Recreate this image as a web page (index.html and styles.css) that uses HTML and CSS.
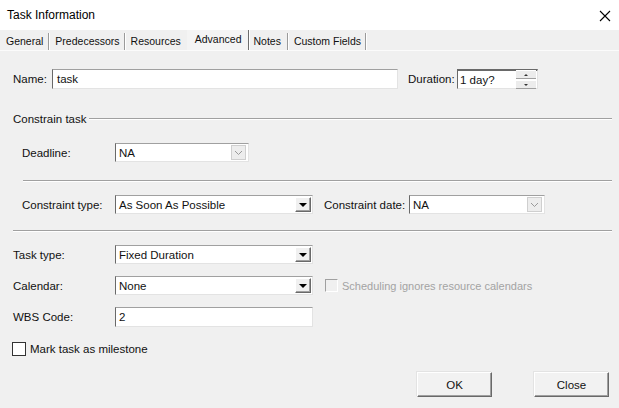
FILE: index.html
```html
<!DOCTYPE html>
<html lang="en">
<head>
<meta charset="UTF-8">
<title>Task Information</title>
<link rel="stylesheet" href="styles.css">
</head>
<body>

<div class="dialog">
  <div class="titlebar">
    <span class="title">Task Information</span>
    <svg class="close" width="12" height="12" viewBox="0 0 12 12">
      <path d="M1 1 L11 11 M11 1 L1 11" stroke="#000" stroke-width="1.1" fill="none"/>
    </svg>
  </div>

  <div class="tabs">
    <span class="tab first">General</span>
    <span class="tab">Predecessors</span>
    <span class="tab nosep">Resources</span>
    <span class="tab active">Advanced</span>
    <span class="tab">Notes</span>
    <span class="tab">Custom Fields</span>
  </div>

  <div class="panel">
    <div class="row name-row">
      <span class="lbl-name">Name:</span>
      <div class="field name-field">task</div>
      <span class="lbl-dur">Duration:</span>
      <div class="field dur-field">
        <span>1 day?</span>
        <div class="spin">
          <span class="spin-btn"><i class="tri up"></i></span>
          <span class="spin-btn"><i class="tri down"></i></span>
        </div>
      </div>
    </div>

    <div class="group-title">
      <span>Constrain task</span>
      <div class="etch"></div>
    </div>

    <div class="row indent deadline-row">
      <span class="lbl lbl-indent">Deadline:</span>
      <div class="combo combo-short">
        <span>NA</span>
        <span class="dd-off">
          <svg width="9" height="6" viewBox="0 0 9 6"><path d="M1 1 L4.5 4.5 L8 1" stroke="#9a9a9a" fill="none"/></svg>
        </span>
      </div>
    </div>

    <div class="etch sep sep-indent"></div>

    <div class="row indent constraint-row">
      <span class="lbl lbl-indent">Constraint type:</span>
      <div class="combo combo-wide">
        <span>As Soon As Possible</span>
        <span class="dd"><i class="tri down big"></i></span>
      </div>
      <span class="lbl-date">Constraint date:</span>
      <div class="combo combo-date">
        <span>NA</span>
        <span class="dd-off">
          <svg width="9" height="6" viewBox="0 0 9 6"><path d="M1 1 L4.5 4.5 L8 1" stroke="#9a9a9a" fill="none"/></svg>
        </span>
      </div>
    </div>

    <div class="etch sep sep2"></div>

    <div class="row task-row">
      <span class="lbl">Task type:</span>
      <div class="combo combo-wide">
        <span>Fixed Duration</span>
        <span class="dd"><i class="tri down big"></i></span>
      </div>
    </div>

    <div class="row cal-row">
      <span class="lbl">Calendar:</span>
      <div class="combo combo-wide">
        <span>None</span>
        <span class="dd"><i class="tri down big"></i></span>
      </div>
      <span class="check check-off"></span>
      <span class="check-lbl off">Scheduling ignores resource calendars</span>
    </div>

    <div class="row wbs-row">
      <span class="lbl">WBS Code:</span>
      <div class="field wbs-field">2</div>
    </div>

    <div class="row milestone-row">
      <span class="check"></span>
      <span class="check-lbl">Mark task as milestone</span>
    </div>

    <div class="buttons">
      <button class="btn">OK</button>
      <button class="btn">Close</button>
    </div>
  </div>
</div>

</body>
</html>
```

FILE: styles.css
```css
body {
  margin: 0;
  font-family: "Liberation Sans", Arial, sans-serif;
  font-size: 11.5px;
  color: #111;
  background-color: #f0f0f0;
}

.dialog {
  width: 619px;
  height: 408px;
  overflow: hidden;
  background-color: #f0f0f0;
}

.titlebar {
  height: 30px;
  background-color: #fff;
  display: flex;
  align-items: center;
  justify-content: space-between;
  padding: 0 8px 0 7px;
}

.title {
  font-size: 12px;
  color: #000;
}

.close {
  margin-top: 1px;
}

/* tab strip */
.tabs {
  height: 20px;
  display: flex;
  align-items: flex-end;
  font-size: 10.5px;
  border-bottom: 1px solid #fbfbfb;
}

.tab {
  height: 17px;
  line-height: 17px;
  padding: 0 4px 0 5px;
  margin-right: 1px;
  border-right: 1px solid #9a9a9a;
  box-shadow: 1px 0 0 #fff;
}

.tab.first {
  padding-left: 6px;
  padding-right: 5px;
}

.tab.nosep {
  border-right-color: transparent;
  box-shadow: none;
  padding-right: 4px;
}

.tab.active {
  height: 20px;
  line-height: 18px;
  padding: 0 7px 0 8px;
  background-color: #f4f4f4;
  border-right: 1px solid #6d6d6d;
}

.tab.active + .tab {
  padding-left: 3px;
  padding-right: 6px;
}

/* panel */
.panel {
  padding: 18px 7px 0 13px;
}

.row {
  display: flex;
  align-items: center;
}

.indent {
  padding-left: 9px;
}

.field,
.combo {
  box-sizing: border-box;
  background-color: #fff;
  border-style: solid;
  border-width: 1px;
  border-color: #a0a0a0 #e3e3e3 #e3e3e3 #696969;
  display: flex;
  align-items: center;
  padding-left: 3px;
}

.name-row {
  height: 20px;
}

.lbl-name {
  width: 39px;
}

.name-field {
  width: 346px;
  height: 20px;
  padding-left: 4px;
}

.lbl-dur {
  margin-left: 10px;
  width: 49px;
}

.dur-field {
  width: 81px;
  height: 20px;
  padding-left: 2px;
  border-top: 2px solid #696969;
  justify-content: space-between;
  padding-right: 1px;
}

.spin {
  display: flex;
  flex-direction: column;
  gap: 1px;
}

.spin-btn {
  width: 20px;
  height: 7px;
  background-color: #ececec;
  border-top: 1px solid #fff;
  border-bottom: 1px solid #a0a0a0;
  display: flex;
  align-items: center;
  justify-content: center;
}

.tri {
  display: block;
  width: 0;
  height: 0;
  border-left: 2px solid transparent;
  border-right: 2px solid transparent;
}

.tri.up {
  border-bottom: 2px solid #333;
}

.tri.down {
  border-top: 2px solid #333;
}

.tri.big {
  border-left-width: 4px;
  border-right-width: 4px;
  border-top: 4px solid #000;
}

/* group box */
.group-title {
  display: flex;
  align-items: center;
  height: 14px;
  margin-top: 23px;
}

.group-title span {
  margin-right: 2px;
}

.group-title .etch {
  flex: 1;
}

.etch {
  height: 1px;
  background-color: #a0a0a0;
  border-bottom: 1px solid #fff;
}

.lbl {
  width: 102px;
}

.lbl-indent {
  width: 93px;
}

.deadline-row {
  margin-top: 17px;
  height: 19px;
}

.combo {
  height: 19px;
  justify-content: space-between;
  padding-right: 1px;
}

.combo-short {
  width: 134px;
  padding-right: 2px;
}

.combo-wide {
  width: 198px;
}

.combo-date {
  width: 136px;
  padding-right: 2px;
}

.dd {
  box-sizing: border-box;
  width: 16px;
  height: 15px;
  background-color: #f0f0f0;
  border-style: solid;
  border-width: 1px;
  border-color: #fff #696969 #696969 #fff;
  box-shadow: inset -1px -1px 0 #a0a0a0;
  display: flex;
  align-items: center;
  justify-content: center;
}

.dd-off {
  box-sizing: border-box;
  width: 15px;
  height: 15px;
  background-color: #ededed;
  border: 1px solid #cfcfcf;
  display: flex;
  align-items: center;
  justify-content: center;
}

.sep {
  margin-top: 18px;
}

.sep-indent {
  margin-left: 10px;
}

.constraint-row {
  margin-top: 13px;
  height: 19px;
}

.lbl-date {
  margin-left: 11px;
  width: 85px;
}

.sep2 {
  margin-top: 16px;
}

.task-row {
  margin-top: 13px;
  height: 19px;
}

.cal-row {
  margin-top: 12px;
  height: 19px;
}

.check {
  box-sizing: border-box;
  width: 14px;
  height: 14px;
  background-color: #fff;
  border: 1px solid #333;
}

.check-off {
  width: 13px;
  height: 13px;
  margin-left: 12px;
  background-color: #f0f0f0;
  border-color: #a0a0a0 #fff #fff #a0a0a0;
}

.check-lbl {
  margin-left: 4px;
}

.check-lbl.off {
  color: #a3a3a3;
  font-size: 11px;
}

.wbs-row {
  margin-top: 12px;
  height: 20px;
}

.wbs-field {
  width: 198px;
  height: 20px;
}

.milestone-row {
  margin-top: 15px;
  margin-left: -1px;
  height: 14px;
}

/* buttons */
.buttons {
  display: flex;
  justify-content: flex-end;
  gap: 42px;
  margin-top: 16px;
  padding-right: 3px;
}

.btn {
  box-sizing: border-box;
  width: 75px;
  height: 25px;
  font-family: "Liberation Sans", Arial, sans-serif;
  font-size: 11.5px;
  color: #111;
  background-color: #f2f2f2;
  border-style: solid;
  border-width: 1px;
  border-color: #fff #696969 #696969 #fff;
  box-shadow: inset -1px -1px 0 #a0a0a0, -1px -1px 0 #e3e3e3;
  padding: 0;
}
```
